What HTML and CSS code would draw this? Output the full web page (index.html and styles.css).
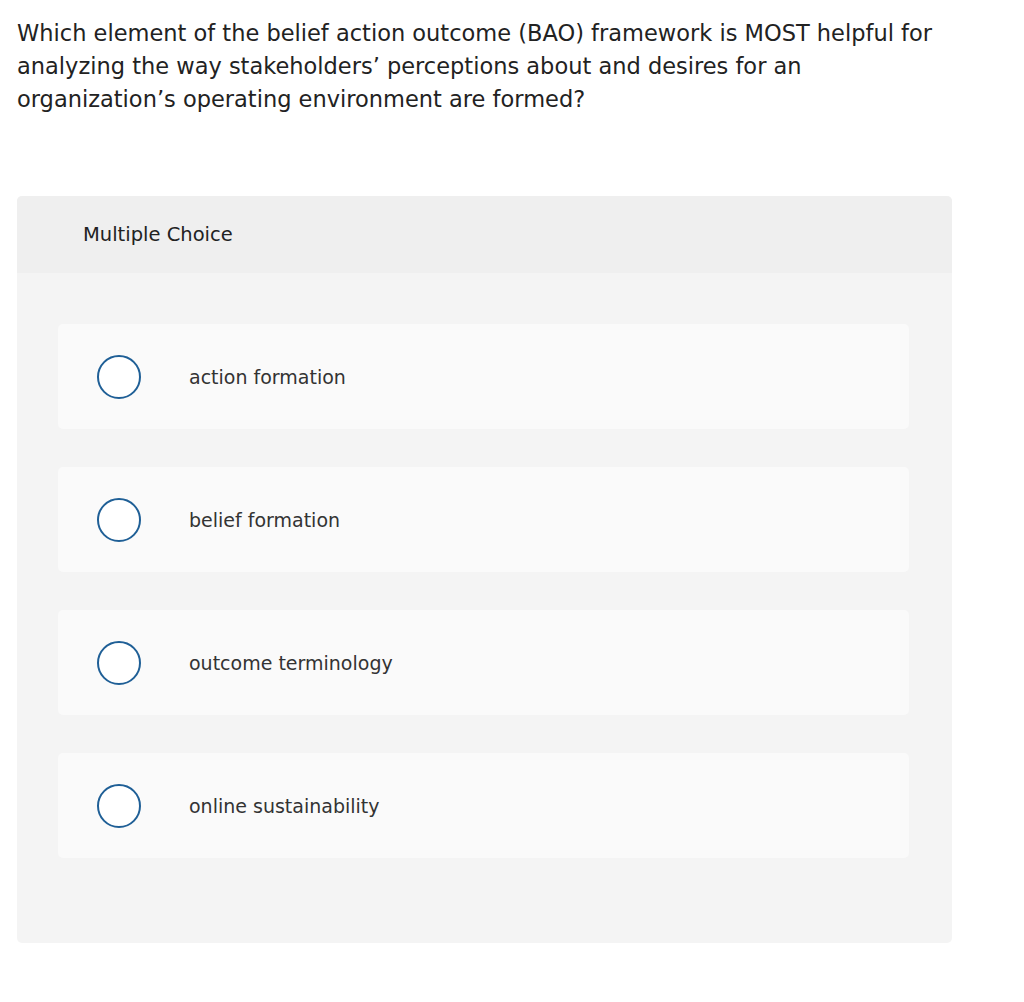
FILE: index.html
```html
<!DOCTYPE html>
<html lang="en">
<head>
    <meta charset="UTF-8">
    <title>Multiple Choice</title>
    <link rel="stylesheet" href="styles.css">
</head>
<body>
    <div class="question">
        <p class="prompt">Which element of the belief action outcome (BAO) framework is MOST helpful for analyzing the way stakeholders’ perceptions about and desires for an organization’s operating environment are formed?</p>

        <div class="choice-box">
            <div class="choice-header">Multiple Choice</div>
            <ul class="choices">
                <li class="choice"><span class="radio"></span><span class="label">action formation</span></li>
                <li class="choice"><span class="radio"></span><span class="label">belief formation</span></li>
                <li class="choice"><span class="radio"></span><span class="label">outcome terminology</span></li>
                <li class="choice"><span class="radio"></span><span class="label">online sustainability</span></li>
            </ul>
        </div>
    </div>
</body>
</html>
```

FILE: styles.css
```css
body {
    font-family: "DejaVu Sans", Arial, sans-serif;
    background-color: #fff;
    color: #222;
    margin: 0;
    padding: 0;
}
.question {
    width: 935px;
    padding: 17px 0 0 17px;
}
.prompt {
    font-size: 22.5px;
    line-height: 33px;
    margin: 0 0 80px 0;
}
.choice-box {
    background-color: #f4f4f4;
    border-radius: 5px;
    overflow: hidden;
}
.choice-header {
    background-color: #efefef;
    height: 77px;
    line-height: 77px;
    padding-left: 66px;
    font-size: 19.5px;
    color: #222;
}
ul.choices {
    list-style: none;
    margin: 0;
    padding: 51px 43px 85px 41px;
    display: flex;
    flex-direction: column;
    gap: 38px;
}
.choice {
    background-color: #fafafa;
    border-radius: 5px;
    height: 105px;
    display: flex;
    align-items: center;
    padding-left: 39px;
}
.radio {
    width: 40px;
    height: 40px;
    border: 2px solid #1f5f96;
    border-radius: 50%;
    background-color: #fff;
    flex-shrink: 0;
}
.label {
    margin-left: 48px;
    font-size: 19px;
    color: #333;
}
```
